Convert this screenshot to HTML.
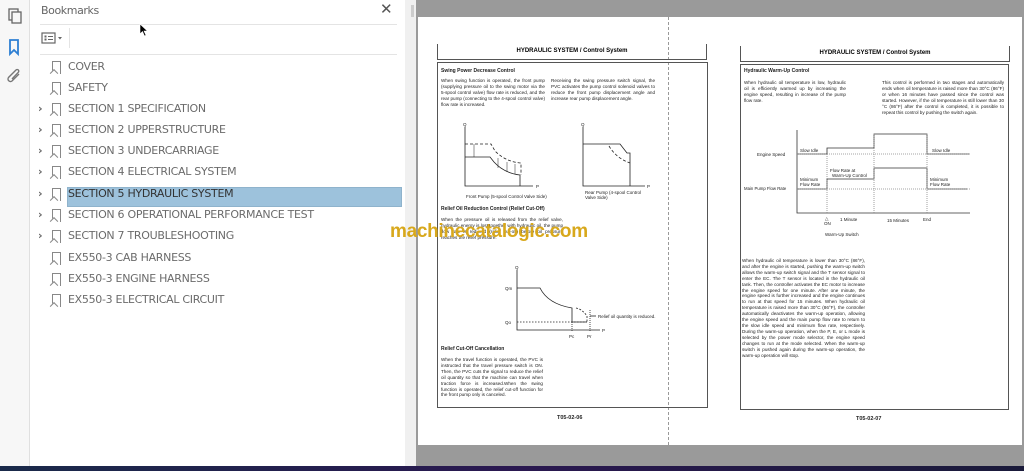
<!DOCTYPE html>
<html><head><meta charset="utf-8"><style>
*{margin:0;padding:0;box-sizing:border-box}
body{width:1024px;height:471px;overflow:hidden;position:relative;background:#fff;font-family:"Liberation Sans",sans-serif}
.a{position:absolute}
.bm{position:absolute;left:68px;font-size:11px;color:#6b6b6b;font-family:"DejaVu Sans","Liberation Sans",sans-serif;letter-spacing:-0.3px;white-space:nowrap}
.ic{position:absolute;left:52px;width:9px;height:13px;border:1.5px solid #888;border-bottom:none}
.ic:after{content:"";position:absolute;left:0.5px;bottom:-1px;width:5px;height:5px;border-left:1.5px solid #888;border-top:1.5px solid #888;transform:rotate(45deg);transform-origin:0 0;background:#fff}
.ch{position:absolute;left:38px;font-size:11px;color:#666;font-family:"DejaVu Sans",sans-serif;font-weight:bold}
.t{position:absolute;font-size:4.6px;line-height:5.9px;color:#222;text-align:justify}
.h{position:absolute;font-size:5px;font-weight:bold;color:#222}
.box{position:absolute;border:1px solid #555}
</style></head><body>
<div class="a" style="left:0;top:0;width:30px;height:471px;background:#f7f7f7;border-right:1px solid #e0e0e0"></div>
<svg class="a" style="left:6px;top:8px" width="18" height="80" viewBox="0 0 18 80">
<rect x="3" y="1" width="9" height="11" fill="none" stroke="#666" stroke-width="1.3"/><rect x="6" y="4" width="9" height="11" fill="#f7f7f7" stroke="#666" stroke-width="1.3"/>
<path d="M4 32 V46 L8 42 L12 46 V32 Z" fill="none" stroke="#2d7fd3" stroke-width="1.8"/>
<path d="M13 66 L6 73 a2.5 2.5 0 0 1 -3.5 -3.5 L10 62 a1.6 1.6 0 0 1 2.3 2.3 L6 71" fill="none" stroke="#777" stroke-width="1.4"/>
</svg>
<div class="a" style="left:405px;top:0;width:11px;height:471px;background:#f0f0f0"></div>
<div class="a" style="left:411px;top:5px;width:3px;height:12px;background:#ccc"></div>
<div class="a" style="left:41px;top:4px;font-size:11px;color:#666;font-family:'DejaVu Sans',sans-serif;letter-spacing:-0.4px">Bookmarks</div>
<div class="a" style="left:380px;top:0px;font-size:15px;color:#555">✕</div>
<div class="a" style="left:40px;top:24px;width:357px;height:1px;background:#e4e4e4"></div>
<div class="a" style="left:40px;top:54px;width:357px;height:1px;background:#e4e4e4"></div>
<div class="a" style="left:69px;top:28px;width:1px;height:20px;background:#e4e4e4"></div>
<svg class="a" style="left:41px;top:32px" width="24" height="12"><rect x="1" y="1" width="13" height="10" fill="none" stroke="#666" stroke-width="1.2"/><rect x="3.5" y="3.5" width="2" height="2" fill="#666"/><rect x="3.5" y="6.5" width="2" height="2" fill="#666"/><line x1="7" y1="4.5" x2="12" y2="4.5" stroke="#666"/><line x1="7" y1="7.5" x2="12" y2="7.5" stroke="#666"/><path d="M17 5 h4 l-2 2.5z" fill="#666"/></svg>
<svg class="a" style="left:139px;top:23px" width="10" height="14"><path d="M1 1 V11 L3.5 8.5 L5.5 13 L7 12.3 L5 8 H8.5 Z" fill="#000" stroke="#fff" stroke-width="0.6"/></svg>
<div class="a" style="left:67px;top:187px;width:335px;height:20px;background:#9dc2dc;border:1px solid #8fb3cc"></div>
<div class="ic" style="top:61px"></div><div class="bm" style="top:60px">COVER</div>
<div class="ic" style="top:82px"></div><div class="bm" style="top:81px">SAFETY</div>
<div class="ch" style="top:102px">›</div><div class="ic" style="top:103px"></div><div class="bm" style="top:102px">SECTION 1 SPECIFICATION</div>
<div class="ch" style="top:123px">›</div><div class="ic" style="top:124px"></div><div class="bm" style="top:123px">SECTION 2 UPPERSTRUCTURE</div>
<div class="ch" style="top:144px">›</div><div class="ic" style="top:145px"></div><div class="bm" style="top:144px">SECTION 3 UNDERCARRIAGE</div>
<div class="ch" style="top:165px">›</div><div class="ic" style="top:166px"></div><div class="bm" style="top:165px">SECTION 4 ELECTRICAL SYSTEM</div>
<div class="ch" style="top:187px">›</div><div class="ic" style="top:188px"></div><div class="bm" style="top:187px;color:#333">SECTION 5 HYDRAULIC SYSTEM</div>
<div class="ch" style="top:208px">›</div><div class="ic" style="top:209px"></div><div class="bm" style="top:208px">SECTION 6 OPERATIONAL PERFORMANCE TEST</div>
<div class="ch" style="top:229px">›</div><div class="ic" style="top:230px"></div><div class="bm" style="top:229px">SECTION 7 TROUBLESHOOTING</div>
<div class="ic" style="top:252px"></div><div class="bm" style="top:251px">EX550-3 CAB HARNESS</div>
<div class="ic" style="top:273px"></div><div class="bm" style="top:272px">EX550-3 ENGINE HARNESS</div>
<div class="ic" style="top:294px"></div><div class="bm" style="top:293px">EX550-3 ELECTRICAL CIRCUIT</div>
<div class="a" style="left:416px;top:0;width:608px;height:471px;background:#9a9a9a"></div>
<div class="a" style="left:418px;top:17px;width:604px;height:428px;background:#fff"></div>
<div class="a" style="left:668px;top:17px;height:428px;border-left:1px dashed #999"></div>
<div class="a" style="left:0;top:466px;width:1024px;height:5px;background:linear-gradient(90deg,#1a2a4a,#2a1850,#1a1a3a)"></div>
<div class="a" style="left:437px;top:44px;width:270px;height:16px;border-left:1px solid #555;border-right:1px solid #555;border-bottom:1px solid #555;font-size:6px;font-weight:bold;text-align:center;line-height:14px">HYDRAULIC SYSTEM / Control System</div>
<div class="box" style="left:437px;top:62px;width:271px;height:346px"></div>
<div class="h" style="left:441px;top:68px">Swing Power Decrease Control</div>
<div class="t" style="left:441px;top:78px;width:104px">When swing function is operated, the front pump (supplying pressure oil to the swing motor via the 5-spool control valve) flow rate is reduced, and the rear pump (connecting to the 4-spool control valve) flow rate is increased.</div>
<div class="t" style="left:551px;top:78px;width:104px">Receiving the swing pressure switch signal, the PVC activates the pump control solenoid valves to reduce the front pump displacement angle and increase rear pump displacement angle.</div>
<svg class="a" style="left:440px;top:118px" width="270" height="230" viewBox="0 0 270 230" fill="none" stroke="#222" stroke-width="0.8" font-size="4.5" font-family="Liberation Sans">
<path d="M25 9 V68 H93"/><path d="M25 39 H50 L54 44 Q64 55 80 57 V68"/><path d="M25 26 H51 L55 33 Q66 44 81 45 V57" stroke-dasharray="3 2"/>
<path d="M34 26 V39 M58 40 V50 M67 44 V54 M75 46 V56" stroke-width="0.5"/>
<path d="M143 9 V68 H205"/><path d="M143 26 H180 L187 35 H190 V68"/><path d="M169 28 Q176 40 190 45" stroke-dasharray="3 2"/>
<path d="M77 152 V212 H160"/><path d="M77 170 H100 Q108 186 132 190 V204 H147"/><path d="M77 204 H147" stroke-dasharray="1.5 1.5"/><path d="M132 204 V214 M150 192 V214" stroke-dasharray="1 1"/><path d="M136 190 Q142 191 147 198 V204" stroke-dasharray="2 1.5"/><path d="M150 198 H156"/>
<g fill="#222" stroke="none"><text x="23" y="8">Q</text><text x="96" y="70">P</text><text x="141" y="8">Q</text><text x="207" y="70">P</text>
<text x="26" y="80">Front Pump (5-spool Control Valve Side)</text><text x="145" y="76">Rear Pump (4-spool Control</text><text x="145" y="81">Valve Side)</text>
<text x="65" y="172">Qm</text><text x="65" y="206">Qo</text><text x="158" y="200">Relief oil quantity is reduced.</text><text x="75" y="151">Q</text><text x="162" y="214">P</text><text x="129" y="220">Pc</text><text x="147" y="220">Pr</text></g>
</svg>
<div class="h" style="left:441px;top:206px">Relief Oil Reduction Control (Relief Cut-Off)</div>
<div class="t" style="left:441px;top:217px;width:122px">When the pressure oil is released from the relief valve, hydraulic energy is lost together with hydraulic oil, the pump flow rate is reduced (relief cut-off) before oil pressure reaches the relief pressure.</div>
<div class="h" style="left:441px;top:346px">Relief Cut-Off Cancellation</div>
<div class="t" style="left:441px;top:357px;width:102px">When the travel function is operated, the PVC is instructed that the travel pressure switch is ON. Then, the PVC cuts the signal to reduce the relief oil quantity so that the machine can travel when traction force is increased.When the swing function is operated, the relief cut-off function for the front pump only is canceled.</div>
<div class="h" style="left:557px;top:415px;font-size:5.5px">T05-02-06</div>
<div class="a" style="left:740px;top:46px;width:270px;height:16px;border-left:1px solid #555;border-right:1px solid #555;border-bottom:1px solid #555;font-size:6px;font-weight:bold;text-align:center;line-height:14px">HYDRAULIC SYSTEM / Control System</div>
<div class="box" style="left:740px;top:64px;width:269px;height:346px"></div>
<div class="h" style="left:744px;top:68px">Hydraulic Warm-Up Control</div>
<div class="t" style="left:744px;top:80px;width:102px">When hydraulic oil temperature is low, hydraulic oil is efficiently warmed up by increasing the engine speed, resulting in increase of the pump flow rate.</div>
<div class="t" style="left:882px;top:80px;width:122px">This control is performed in two stages and automatically ends when oil temperature is raised more than 30°C (86°F) or when 16 minutes have passed since the control was started. However, if the oil temperature is still lower than 30 °C (86°F) after the control is completed, it is possible to repeat this control by pushing the switch again.</div>
<svg class="a" style="left:720px;top:110px" width="300" height="140" viewBox="0 0 300 140" fill="none" stroke="#333" stroke-width="0.8" font-size="4.5" font-family="Liberation Sans">
<path d="M77 20 V103 H250"/><path d="M77 44 H107 V38 H154 V24 H207 V44 H249"/><path d="M77 79 H107 V69 H154 V58 H207 V79 H247"/>
<path d="M77 44 H250 M77 79 H250 M107 44 V103 M154 24 V103 M207 24 V103" stroke-dasharray="1 1" stroke="#888"/>
<g fill="#222" stroke="none"><text x="37" y="46">Engine Speed</text><text x="24" y="80" font-size="4.3">Main Pump Flow Rate</text><text x="80" y="42">Slow Idle</text><text x="212" y="42">Slow Idle</text>
<text x="80" y="71">Minimum</text><text x="80" y="76">Flow Rate</text><text x="210" y="71">Minimum</text><text x="210" y="76">Flow Rate</text>
<text x="110" y="62">Flow Rate at</text><text x="112" y="67">Warm-Up Control</text><text x="105" y="110">△</text><text x="104" y="115">ON</text><text x="120" y="111">1 Minute</text><text x="167" y="112">15 Minutes</text><text x="203" y="111">End</text><text x="105" y="126">Warm-Up Switch</text></g>
</svg>
<div class="t" style="left:742px;top:258px;width:123px">When hydraulic oil temperature is lower than 30°C (86°F), and after the engine is started, pushing the warm-up switch allows the warm-up switch signal and the T sensor signal to enter the EC. The T sensor is located in the hydraulic oil tank. Then, the controller activates the EC motor to increase the engine speed for one minute. After one minute, the engine speed is further increased and the engine continues to run at that speed for 15 minutes. When hydraulic oil temperature is raised more than 30°C (86°F), the controller automatically deactivates the warm-up operation, allowing the engine speed and the main pump flow rate to return to the slow idle speed and minimum flow rate, respectively. During the warm-up operation, when the P, E, or L mode is selected by the power mode selector, the engine speed changes to run at the mode selected. When the warm-up switch is pushed again during the warm-up operation, the warm-up operation will stop.</div>
<div class="h" style="left:856px;top:416px;font-size:5.5px">T05-02-07</div>
<div class="a" style="left:390px;top:221px;font-size:19px;font-weight:bold;color:#d8a81c;letter-spacing:-0.3px">machinecatalogic.com</div>
</body></html>
